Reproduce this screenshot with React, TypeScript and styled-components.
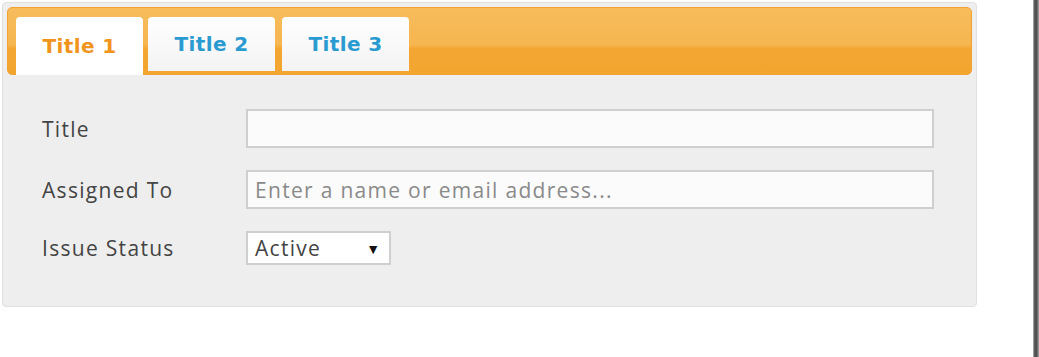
import React from "react"
import styled, { createGlobalStyle } from "styled-components"

const GlobalStyle = createGlobalStyle`
  html, body {
    margin: 0;
    padding: 0;
    background: #ffffff;
  }
  body {
    font-family: "Open Sans", "Liberation Sans", sans-serif;
  }
`

const tabs = ["Title 1", "Title 2", "Title 3"]

const App: React.FC = () => {
  return (
    <Page>
      <GlobalStyle />
      <Main>
        <Panel>
          <TabBar>
            {tabs.map((t, i) => (
              <Tab key={t} active={i === 0}>
                {t}
              </Tab>
            ))}
          </TabBar>
          <Form>
            <Row>
              <Label>Title</Label>
              <TextInput type="text" />
            </Row>
            <Row>
              <Label>Assigned To</Label>
              <TextInput type="text" placeholder="Enter a name or email address..." />
            </Row>
            <Row>
              <Label>Issue Status</Label>
              <Select>
                <span>Active</span>
                <Arrow>▼</Arrow>
              </Select>
            </Row>
          </Form>
        </Panel>
      </Main>
      <Divider />
    </Page>
  )
}

const Page = styled.div`
  display: flex;
  width: 1039px;
  height: 357px;
  overflow: hidden;
`

const Main = styled.div`
  flex-grow: 1;
  padding: 2px 0 0 2px;
`

const Panel = styled.div`
  width: 975px;
  height: 305px;
  box-sizing: border-box;
  background: #eeeeee;
  border: 1px solid #e0e0e0;
  border-radius: 4px;
  padding: 4px 4px 0 4px;
`

const TabBar = styled.div`
  display: flex;
  align-items: flex-end;
  gap: 5px;
  height: 68px;
  box-sizing: border-box;
  padding: 10px 8px 0 8px;
  background: linear-gradient(to bottom, #f7bc5c 0%, #f6b650 55%, #f3a631 62%, #f2a52f 100%);
  border: 1px solid #f0a232;
  border-radius: 5px;
`

const Tab = styled.div<{ active?: boolean }>`
  width: 127px;
  height: ${p => (p.active ? "58px" : "54px")};
  margin-bottom: ${p => (p.active ? "-1px" : "3px")};
  margin-right: ${p => (p.active ? "0" : "2px")};
  box-sizing: border-box;
  display: flex;
  align-items: center;
  justify-content: center;
  padding-bottom: ${p => (p.active ? "1px" : "0")};
  border-radius: 4px 4px 0 0;
  background: ${p =>
    p.active ? "#ffffff" : "linear-gradient(to bottom, #ffffff 0%, #f3f3f3 100%)"};
  color: ${p => (p.active ? "#f0941c" : "#2a9bd1")};
  font-family: "DejaVu Sans", sans-serif;
  font-weight: 700;
  font-size: 20px;
  letter-spacing: 0.4px;
`

const Form = styled.div`
  display: flex;
  flex-direction: column;
  gap: 22px;
  padding: 34px 38px 0 35px;
`

const Row = styled.div`
  display: flex;
  align-items: center;
`

const Label = styled.div`
  width: 204px;
  flex-shrink: 0;
  color: #444444;
  font-size: 21px;
  letter-spacing: 1.3px;
`

const TextInput = styled.input`
  flex-grow: 1;
  height: 39px;
  box-sizing: border-box;
  border: 2px solid #cfcfcf;
  background: #fbfbfb;
  padding: 0 7px;
  font-family: "Open Sans", sans-serif;
  font-size: 21px;
  letter-spacing: 1.3px;
  color: #444;
  outline: none;

  &::placeholder {
    color: #8a8a8a;
  }
`

const Select = styled.div`
  width: 145px;
  height: 34px;
  box-sizing: border-box;
  border: 2px solid #cfcfcf;
  background: #ffffff;
  display: flex;
  align-items: center;
  justify-content: space-between;
  padding: 0 9px 0 7px;
  color: #444444;
  font-size: 21px;
  letter-spacing: 1.3px;
`

const Arrow = styled.span`
  font-size: 14px;
  letter-spacing: 0;
  color: #111;
`

const Divider = styled.div`
  width: 6px;
  height: 100%;
  background: linear-gradient(to right, #bbbbbb 0%, #4c4c4c 30%, #555 65%, #a8a8a8 100%);
`

export default App
